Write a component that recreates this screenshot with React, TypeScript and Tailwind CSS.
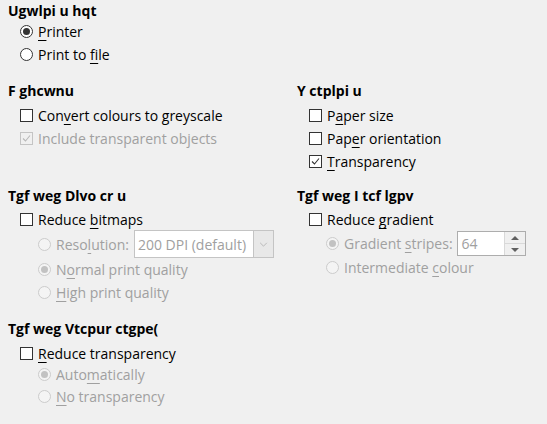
import React from 'react';

const font = { fontFamily: '"Open Sans", "Noto Sans", sans-serif' };

function U({ children }: { children: React.ReactNode }) {
  return <span className="underline underline-offset-[3px] decoration-1">{children}</span>;
}

function Check({ checked, disabled }: { checked?: boolean; disabled?: boolean }) {
  return (
    <span
      className={`relative flex h-[13px] w-[13px] shrink-0 items-center justify-center border ${
        disabled ? 'border-[#c4c4c4] bg-[#f0f0f0]' : 'border-[#333333] bg-white'
      }`}
    >
      {checked && (
        <svg viewBox="0 0 11 11" className="h-[11px] w-[11px]">
          <path
            d="M2 5.5 L4.5 8 L9 2.5"
            fill="none"
            stroke={disabled ? '#b8b8b8' : '#333333'}
            strokeWidth="1.1"
          />
        </svg>
      )}
    </span>
  );
}

function Radio({ checked, disabled }: { checked?: boolean; disabled?: boolean }) {
  return (
    <span
      className={`flex h-[13px] w-[13px] shrink-0 items-center justify-center rounded-full border ${
        disabled ? 'border-[#cccccc] bg-[#f4f4f4]' : 'border-[#333333] bg-white'
      }`}
    >
      {checked && (
        <span
          className={`h-[7px] w-[7px] rounded-full ${disabled ? 'bg-[#c2c2c2]' : 'bg-[#333333]'}`}
        />
      )}
    </span>
  );
}

function Row({
  kind,
  checked,
  disabled,
  h = 'h-[23px]',
  children,
}: {
  kind: 'check' | 'radio';
  checked?: boolean;
  disabled?: boolean;
  h?: string;
  children: React.ReactNode;
}) {
  return (
    <div className={`flex items-center gap-[5px] ${h} ${disabled ? 'text-[#a0a0a0]' : 'text-black'}`}>
      {kind === 'check' ? <Check checked={checked} disabled={disabled} /> : <Radio checked={checked} disabled={disabled} />}
      <span className="whitespace-nowrap">{children}</span>
    </div>
  );
}

function Heading({ children }: { children: React.ReactNode }) {
  return <div className="flex h-[20px] items-center font-bold text-black">{children}</div>;
}

export default function App() {
  return (
    <div className="h-[424px] w-[547px] overflow-hidden bg-[#f0f0f0] pl-[8px] text-[14px]" style={font}>
      {/* Output */}
      <Heading>Ugwlpi u hqt</Heading>
      <div className="pl-[12px]">
        <Row kind="radio" checked>
          <U>P</U>rinter
        </Row>
        <Row kind="radio">
          Print to <U>f</U>ile
        </Row>
      </div>

      <div className="mt-[14px] grid grid-cols-[289px_1fr]">
        <div>
          <Heading>F ghcwnu</Heading>
          <div className="mt-[4px] pl-[12px]">
            <Row kind="check">
              Con<U>v</U>ert colours to greyscale
            </Row>
            <Row kind="check" checked disabled>
              Include transparent objects
            </Row>
          </div>
        </div>
        <div>
          <Heading>Y ctplpi u</Heading>
          <div className="mt-[4px] pl-[12px]">
            <Row kind="check">
              P<U>a</U>per size
            </Row>
            <Row kind="check">
              Pap<U>e</U>r orientation
            </Row>
            <Row kind="check" checked>
              <U>T</U>ransparency
            </Row>
          </div>
        </div>
      </div>

      <div className="mt-[12px] grid grid-cols-[289px_1fr]">
        <div>
          <Heading>Tgf weg Dlvo cr u</Heading>
          <div className="mt-[3px] pl-[12px]">
            <Row kind="check">
              Reduce <U>b</U>itmaps
            </Row>
            <div className="-mt-[1px] pl-[18px]">
              <div className="flex h-[28px] items-center">
                <Row kind="radio" disabled h="h-[28px]">
                  Reso<U>l</U>ution:
                </Row>
                <div className="ml-[5px] flex h-[28px] w-[140px] border border-[#c4c4c4] bg-white">
                  <div className="flex flex-1 items-center pl-[3px] text-[#a0a0a0] whitespace-nowrap">
                    200 DPI (default)
                  </div>
                  <div className="flex w-[20px] items-center justify-center border-l border-[#c4c4c4] bg-[#e8e8e8]">
                    <svg viewBox="0 0 10 6" className="h-[5px] w-[9px]">
                      <path d="M1 1 L5 5 L9 1" fill="none" stroke="#b0b0b0" strokeWidth="1" />
                    </svg>
                  </div>
                </div>
              </div>
              <Row kind="radio" checked disabled>
                N<U>o</U>rmal print quality
              </Row>
              <Row kind="radio" disabled>
                <U>H</U>igh print quality
              </Row>
            </div>
          </div>
        </div>
        <div>
          <Heading>Tgf weg I tcf lgpv</Heading>
          <div className="mt-[3px] pl-[12px]">
            <Row kind="check">
              Reduce <U>g</U>radient
            </Row>
            <div className="pl-[17px]">
              <div className="flex h-[25px] items-center">
                <Row kind="radio" checked disabled h="h-[25px]">
                  Gradient <U>s</U>tripes:
                </Row>
                <div className="ml-[4px] flex h-[25px] w-[69px] border border-[#adadad] bg-white">
                  <div className="flex flex-1 items-center pl-[4px] text-[#a0a0a0]">64</div>
                  <div className="flex w-[21px] flex-col border-l border-[#d9d9d9]">
                    <div className="flex flex-1 items-center justify-center border-b border-[#d9d9d9] bg-[#f0f0f0]">
                      <svg viewBox="0 0 8 4" className="h-[4px] w-[8px]">
                        <path d="M0 4 L4 0 L8 4 Z" fill="#606060" />
                      </svg>
                    </div>
                    <div className="flex flex-1 items-center justify-center bg-[#f0f0f0]">
                      <svg viewBox="0 0 8 4" className="h-[4px] w-[8px]">
                        <path d="M0 0 L8 0 L4 4 Z" fill="#606060" />
                      </svg>
                    </div>
                  </div>
                </div>
              </div>
              <Row kind="radio" disabled>
                Intermediate <U>c</U>olour
              </Row>
            </div>
          </div>
        </div>
      </div>

      <div className="mt-[14px]">
        <Heading>Tgf weg Vtcpur ctgpe(</Heading>
        <div className="mt-[4px] pl-[12px]">
          <Row kind="check" h="h-[22px]">
            <U>R</U>educe transparency
          </Row>
          <div className="pl-[18px]">
            <Row kind="radio" checked disabled h="h-[21px]">
              Auto<U>m</U>atically
            </Row>
            <Row kind="radio" disabled>
              <U>N</U>o transparency
            </Row>
          </div>
        </div>
      </div>
    </div>
  );
}
